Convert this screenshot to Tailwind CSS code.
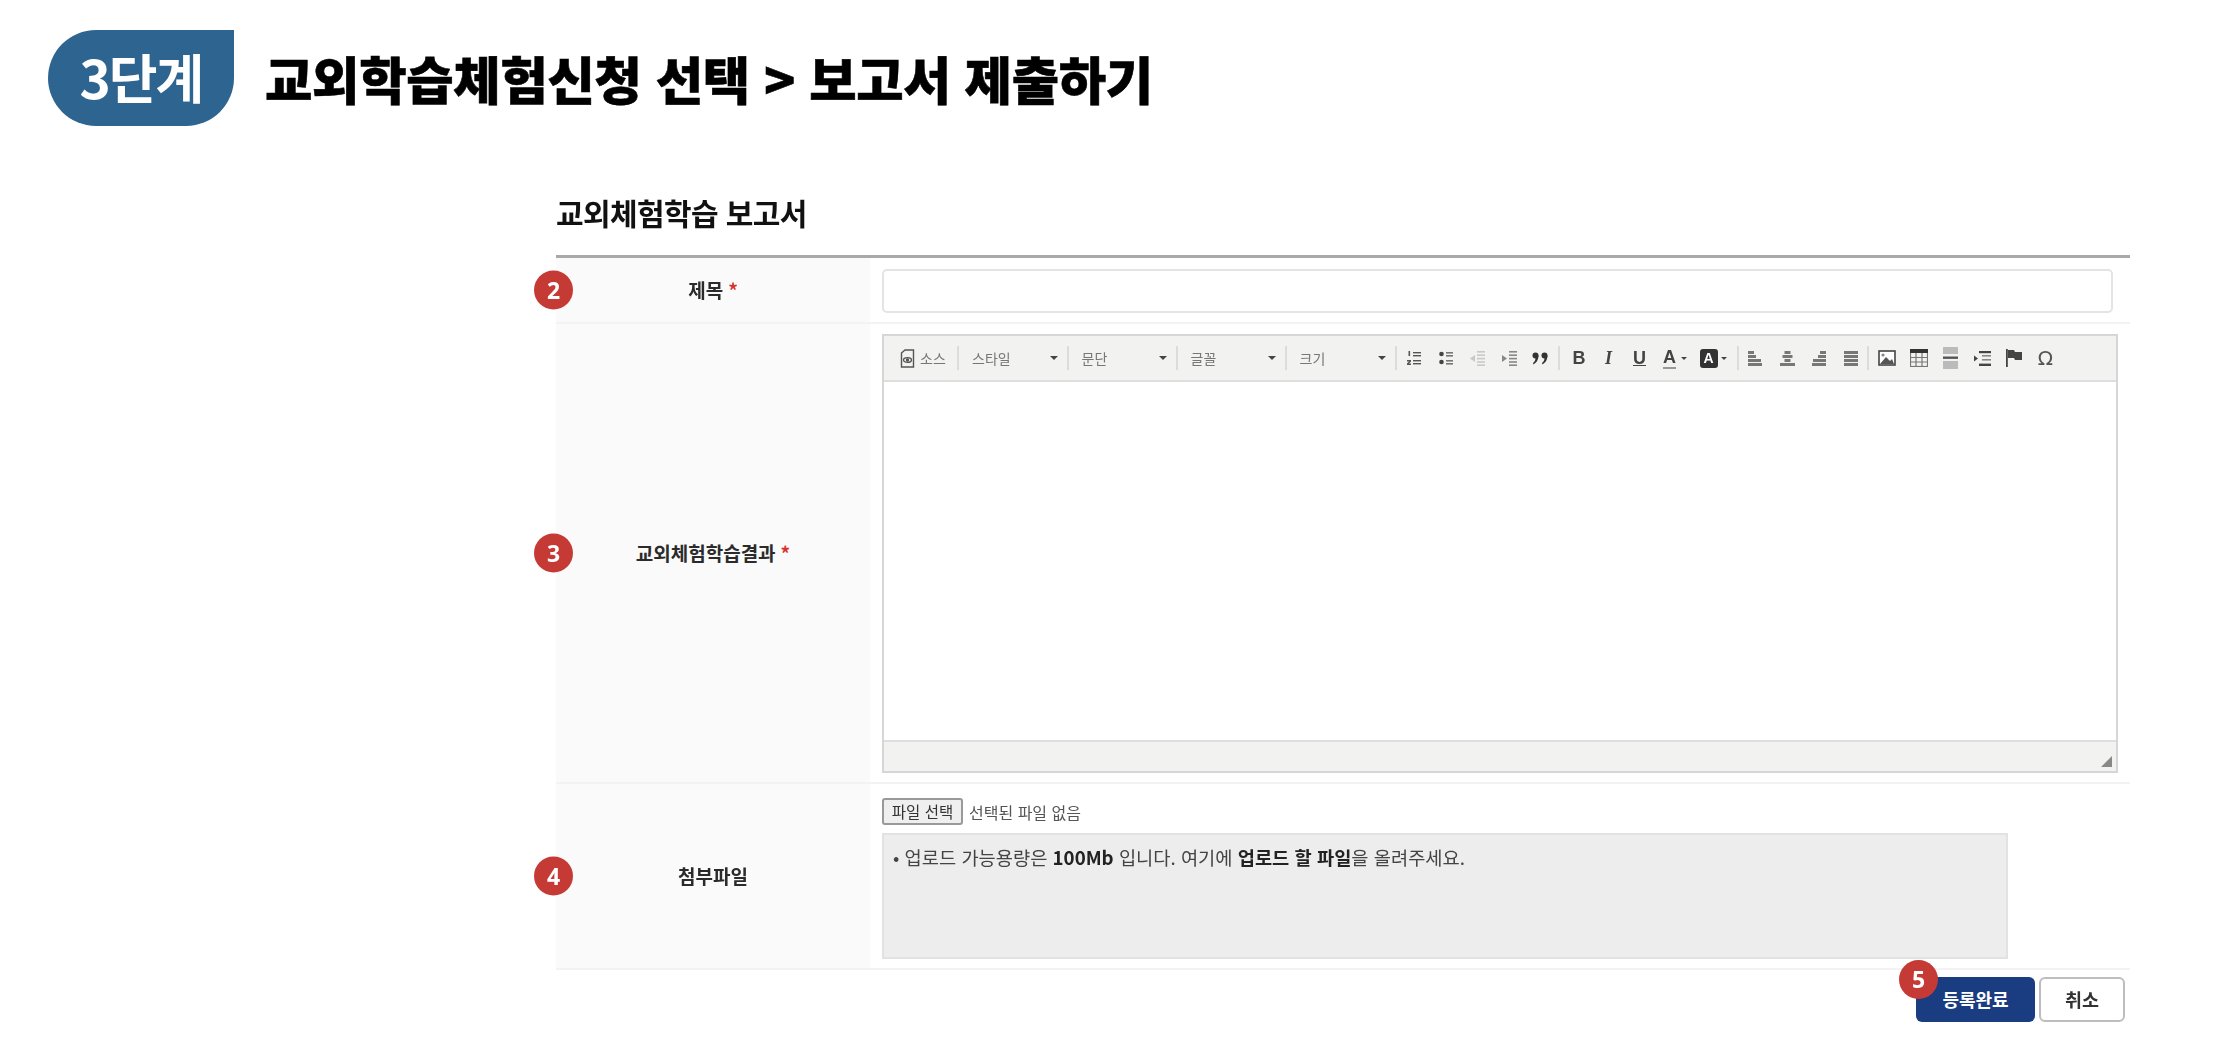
<!DOCTYPE html>
<html lang="ko">
<head>
    <meta charset="UTF-8">
    <meta name="viewport" content="width=device-width, initial-scale=1.0">
    <title>3단계 보고서 제출하기</title>
    <script src="https://cdn.jsdelivr.net/npm/@tailwindcss/browser@4"></script>
</head>
<body class="bg-white h-[1052px] overflow-hidden font-['Noto_Sans_CJK_KR','Noto_Sans',sans-serif]">
    <!-- step header -->
    <header class="flex items-center pl-[48px] pt-[30px] h-[126px]">
        <div class="w-[186px] h-[96px] bg-[#2d6490] rounded-tl-[48px] rounded-bl-[48px] rounded-br-[48px] flex items-center justify-center text-white text-[53px] font-bold tracking-[-2px] pb-[2px]">3단계</div>
        <h1 class="ml-[31px] text-[51.5px] font-black text-black tracking-[-0.3px] [-webkit-text-stroke:0.6px_black]">교외학습체험신청 선택 &gt; 보고서 제출하기</h1>
    </header>

    <main class="ml-[556px] w-[1574px] blur-[0.6px]">
        <h2 class="mt-[65px] h-[42px] leading-[42px] text-[30px] font-bold text-[#111] tracking-[-0.6px]">교외체험학습 보고서</h2>
        <div class="mt-[22px] border-t-[3px] border-[#a9a9a9]">

            <!-- title row -->
            <div class="relative grid grid-cols-[314px_1fr] h-[66px] border-b-2 border-[#f3f3f3]">
                <span class="absolute -left-[22px] top-1/2 -translate-y-1/2 w-[39px] h-[39px] rounded-full bg-[#c53a35] text-white text-[23px] font-bold flex items-center justify-center font-['Noto_Sans',sans-serif]">2</span>
                <div class="bg-[#fafafa] flex items-center justify-center text-[19px] font-bold text-[#2b2b2b]">제목<span class="ml-[5px] text-[#d9342b]">*</span></div>
                <div class="pl-[12px] pt-[11px]">
                    <div class="w-[1231px] h-[44px] bg-white border-2 border-[#e4e4e4] rounded-[5px]"></div>
                </div>
            </div>

            <!-- editor row -->
            <div class="relative grid grid-cols-[314px_1fr] h-[460px] border-b-2 border-[#f3f3f3]">
                <span class="absolute -left-[22px] top-1/2 -translate-y-1/2 w-[39px] h-[39px] rounded-full bg-[#c53a35] text-white text-[23px] font-bold flex items-center justify-center font-['Noto_Sans',sans-serif]">3</span>
                <div class="bg-[#fafafa] flex items-center justify-center text-[19px] font-bold text-[#2b2b2b]">교외체험학습결과<span class="ml-[5px] text-[#d9342b]">*</span></div>
                <div class="pl-[12px] pt-[10px]">
                    <div class="w-[1236px] h-[439px] border-2 border-[#d6d6d6] flex flex-col">
                        <div class="h-[46px] bg-[#f2f2f1] border-b-2 border-[#dedede] flex items-center pl-[16px] text-[#777] text-[14px]">
                            <svg class="w-[15px] h-[19px]" viewBox="0 0 15 19" fill="none" stroke="#555" stroke-width="1.4"><path d="M1.5 4 L5 1 H13.5 V18 H1.5 Z"/><ellipse cx="7.5" cy="11" rx="4" ry="2.4"/><circle cx="7.5" cy="11" r="1" fill="#555"/></svg>
                            <span class="ml-[5px] w-[27px]">소스</span>
                            <span class="ml-[10px] w-[2px] h-[24px] bg-[#dcdcdc]"></span>
                            <div class="w-[107.5px] pl-[13px] pr-[9px] flex items-center justify-between"><span>스타일</span><span class="w-0 h-0 border-x-[4px] border-t-[4px] border-x-transparent border-t-[#444]"></span></div>
                            <span class="w-[2px] h-[24px] bg-[#dcdcdc]"></span>
                            <div class="w-[107px] pl-[13px] pr-[9px] flex items-center justify-between"><span>문단</span><span class="w-0 h-0 border-x-[4px] border-t-[4px] border-x-transparent border-t-[#444]"></span></div>
                            <span class="w-[2px] h-[24px] bg-[#dcdcdc]"></span>
                            <div class="w-[107px] pl-[13px] pr-[9px] flex items-center justify-between"><span>글꼴</span><span class="w-0 h-0 border-x-[4px] border-t-[4px] border-x-transparent border-t-[#444]"></span></div>
                            <span class="w-[2px] h-[24px] bg-[#dcdcdc]"></span>
                            <div class="w-[108px] pl-[13px] pr-[9px] flex items-center justify-between"><span>크기</span><span class="w-0 h-0 border-x-[4px] border-t-[4px] border-x-transparent border-t-[#444]"></span></div>
                            <span class="w-[2px] h-[24px] bg-[#dcdcdc]"></span>

                            <!-- list group -->
                            <div class="flex items-center pl-[2px]">
                                <span class="w-[31.5px] flex justify-center"><svg class="w-[14px] h-[16px]" viewBox="0 0 14 16" fill="#555"><rect x="1.5" y="1" width="1.6" height="5"/><path d="M0 10 H4 V11.5 L2 13.5 H4 V15 H0 V13.5 L2 11.5 H0 Z"/><rect x="6" y="2" width="8" height="1.4"/><rect x="6" y="5" width="8" height="1.4"/><rect x="6" y="10" width="8" height="1.4"/><rect x="6" y="13" width="8" height="1.4"/></svg></span>
                                <span class="w-[31.5px] flex justify-center"><svg class="w-[14px] h-[14px]" viewBox="0 0 14 14" fill="#444"><circle cx="2.5" cy="3" r="2.3"/><circle cx="2.5" cy="11" r="2.3"/><rect x="7" y="1" width="7" height="1.6" fill="#777"/><rect x="7" y="4" width="7" height="1.6" fill="#777"/><rect x="7" y="9" width="7" height="1.6" fill="#777"/><rect x="7" y="12" width="7" height="1.6" fill="#777"/></svg></span>
                                <span class="w-[31.5px] flex justify-center"><svg class="w-[16px] h-[15px]" viewBox="0 0 16 15" fill="#c9c9c9"><rect x="8" y="0" width="8" height="1.6"/><rect x="8" y="3.4" width="8" height="1.6"/><rect x="8" y="6.8" width="8" height="1.6"/><rect x="8" y="10.2" width="8" height="1.6"/><rect x="8" y="13.4" width="8" height="1.6"/><path d="M6 4 V11 L1 7.5 Z"/></svg></span>
                                <span class="w-[31.5px] flex justify-center"><svg class="w-[16px] h-[15px]" viewBox="0 0 16 15" fill="#888"><rect x="8" y="0" width="8" height="1.6"/><rect x="8" y="3.4" width="8" height="1.6"/><rect x="8" y="6.8" width="8" height="1.6"/><rect x="8" y="10.2" width="8" height="1.6"/><rect x="8" y="13.4" width="8" height="1.6"/><path d="M1 4 V11 L6 7.5 Z"/></svg></span>
                                <span class="w-[31.5px] flex justify-center"><svg class="w-[17px] h-[13px]" viewBox="0 0 17 13" fill="#333"><circle cx="3.5" cy="3.5" r="3"/><path d="M6.5 3.5 C6.5 8 4 11 1.5 12.5 L1 11 C2.5 10 3.5 8 3.5 6 Z"/><circle cx="12.5" cy="3.5" r="3"/><path d="M15.5 3.5 C15.5 8 13 11 10.5 12.5 L10 11 C11.5 10 12.5 8 12.5 6 Z"/></svg></span>
                            </div>
                            <span class="ml-[2px] w-[2px] h-[24px] bg-[#dcdcdc]"></span>

                            <!-- text style group -->
                            <div class="flex items-center pl-[3px] text-[#444] font-['Liberation_Sans',sans-serif]">
                                <span class="w-[32px] text-center text-[18px] font-bold">B</span>
                                <span class="w-[27px] text-center text-[18px] font-bold italic font-['Liberation_Serif',serif]">I</span>
                                <span class="w-[35px] text-center text-[18px] font-bold underline">U</span>
                                <span class="w-[36px] flex items-center justify-center gap-[5px] text-[18px] font-bold"><span class="border-b-2 border-[#999] leading-[20px]">A</span><span class="w-0 h-0 border-x-[3px] border-t-[3px] border-x-transparent border-t-[#444]"></span></span>
                                <span class="w-[40px] flex items-center justify-center gap-[3px]"><span class="w-[18px] h-[19px] rounded-[3px] bg-[#333] text-white text-[14px] font-bold flex items-center justify-center">A</span><span class="w-0 h-0 border-x-[3px] border-t-[3px] border-x-transparent border-t-[#444]"></span></span>
                            </div>
                            <span class="ml-[4px] w-[2px] h-[24px] bg-[#dcdcdc]"></span>

                            <!-- align group -->
                            <div class="flex items-center">
                                <span class="w-[32px] flex justify-center"><svg class="w-[14px] h-[15px]" viewBox="0 0 14 15" fill="#777"><rect width="6" height="3"/><rect y="4" width="8" height="3"/><rect y="8" width="13" height="3"/><rect y="12" width="14" height="3"/></svg></span>
                                <span class="w-[32px] flex justify-center"><svg class="w-[15px] h-[15px]" viewBox="0 0 15 15" fill="#777"><rect x="4.5" width="6" height="3"/><rect x="2.5" y="4" width="10" height="3"/><rect x="4.5" y="8" width="6" height="3"/><rect y="12" width="15" height="3"/></svg></span>
                                <span class="w-[32px] flex justify-center"><svg class="w-[14px] h-[15px]" viewBox="0 0 14 15" fill="#777"><rect x="8" width="6" height="3"/><rect x="6" y="4" width="8" height="3"/><rect x="1" y="8" width="13" height="3"/><rect y="12" width="14" height="3"/></svg></span>
                                <span class="w-[32px] flex justify-center"><svg class="w-[14px] h-[15px]" viewBox="0 0 14 15" fill="#777"><rect width="14" height="3"/><rect y="4" width="14" height="3"/><rect y="8" width="14" height="3"/><rect y="12" width="14" height="3"/></svg></span>
                            </div>
                            <span class="w-[2px] h-[24px] bg-[#dcdcdc]"></span>

                            <!-- insert group -->
                            <div class="flex items-center pl-[2px]">
                                <span class="w-[32px] flex justify-center"><svg class="w-[18px] h-[16px]" viewBox="0 0 18 16"><rect x="1" y="1" width="16" height="14" fill="#fff" stroke="#444" stroke-width="1.6"/><path d="M2 14 L8 7 L12 11 L14 9 L16 14 Z" fill="#555"/><circle cx="5" cy="5" r="1.6" fill="#888"/></svg></span>
                                <span class="w-[32px] flex justify-center"><svg class="w-[18px] h-[18px]" viewBox="0 0 18 18" fill="none" stroke="#777" stroke-width="1.2"><rect x="0.5" y="0.5" width="17" height="17"/><rect x="0" y="0" width="18" height="4" fill="#333" stroke="none"/><path d="M6 4 V18 M12 4 V18 M0 8.5 H18 M0 13 H18"/></svg></span>
                                <span class="w-[31px] flex justify-center"><svg class="w-[15px] h-[22px]" viewBox="0 0 15 22" fill="#bbb"><rect width="15" height="7"/><rect y="9.5" width="15" height="2.4" fill="#555"/><rect y="14" width="15" height="8"/></svg></span>
                                <span class="w-[32px] flex justify-center"><svg class="w-[17px] h-[15px]" viewBox="0 0 17 15" fill="#444"><path d="M0 4.5 V10.5 L4 7.5 Z"/><rect x="5" y="0" width="12" height="2.2"/><rect x="8" y="4" width="9" height="1.6" fill="#888"/><rect x="8" y="8" width="9" height="1.6" fill="#888"/><rect x="5" y="12.6" width="12" height="2.4"/></svg></span>
                                <span class="w-[32px] flex justify-center"><svg class="w-[16px] h-[18px]" viewBox="0 0 16 18" fill="#444"><rect x="0" y="0" width="1.8" height="18"/><path d="M2 1 H8 L9 3 H16 V11 H9 L8 9 H2 Z"/></svg></span>
                                <span class="w-[31px] text-center text-[20px] leading-none text-[#555] font-['DejaVu_Sans',sans-serif]">Ω</span>
                            </div>
                        </div>
                        <div class="flex-1 bg-white"></div>
                        <div class="h-[31px] bg-[#f2f2f1] border-t-2 border-[#dedede] flex items-end justify-end pr-[4px] pb-[4px]">
                            <svg class="w-[11px] h-[11px]" viewBox="0 0 11 11" fill="#888"><path d="M11 0 V11 H0 Z"/></svg>
                        </div>
                    </div>
                </div>
            </div>

            <!-- attachment row -->
            <div class="relative grid grid-cols-[314px_1fr] h-[186px] border-b-2 border-[#f3f3f3]">
                <span class="absolute -left-[22px] top-1/2 -translate-y-1/2 w-[39px] h-[39px] rounded-full bg-[#c53a35] text-white text-[23px] font-bold flex items-center justify-center font-['Noto_Sans',sans-serif]">4</span>
                <div class="bg-[#fafafa] flex items-center justify-center text-[19px] font-bold text-[#2b2b2b]">첨부파일</div>
                <div class="pl-[12px] pt-[14px]">
                    <div class="flex items-center h-[27px]">
                        <button class="w-[81px] h-[27px] bg-[#efefef] border-2 border-[#999] rounded-[3px] text-[15.5px] text-[#333]">파일 선택</button>
                        <span class="ml-[6px] text-[16px] text-[#555]">선택된 파일 없음</span>
                    </div>
                    <div class="mt-[8px] w-[1126px] h-[126px] bg-[#ededed] border-2 border-[#e2e2e2] pl-[9px] pt-[8px] text-[18.7px] text-[#444] leading-[28px]">• 업로드 가능용량은 <b class="text-[#222]">100Mb</b> 입니다. 여기에 <b class="text-[#222]">업로드 할 파일</b>을 올려주세요.</div>
                </div>
            </div>
        </div>

        <!-- actions -->
        <div class="mt-[7px] flex justify-end gap-[4px] pr-[5px]">
            <div class="relative">
                <span class="absolute -left-[17px] -top-[17px] w-[39px] h-[39px] rounded-full bg-[#c53a35] text-white text-[23px] font-bold flex items-center justify-center font-['Noto_Sans',sans-serif]">5</span>
                <button class="w-[119px] h-[45px] bg-[#1a3c80] rounded-[6px] text-white text-[18px] font-bold">등록완료</button>
            </div>
            <button class="w-[86px] h-[45px] bg-white border-2 border-[#bdbdbd] rounded-[6px] text-[#333] text-[18.5px] font-bold">취소</button>
        </div>
    </main>
</body>
</html>
